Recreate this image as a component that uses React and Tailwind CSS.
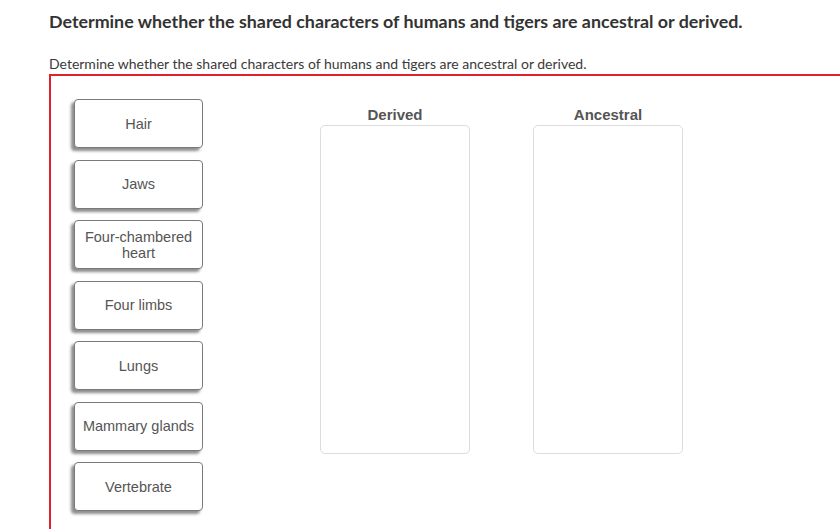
import React from "react";

const items = [
  "Hair",
  "Jaws",
  "Four-chambered heart",
  "Four limbs",
  "Lungs",
  "Mammary glands",
  "Vertebrate",
];

function Card({ label }) {
  return (
    <div className="w-[129px] h-[49px] flex items-center justify-center text-center bg-white border border-[#7a7a7a] rounded-[4px] shadow-[-3px_3px_3px_rgba(0,0,0,0.45)] px-1 text-[14.5px] leading-[16px] text-[#555]">
      <span className="w-[116px]">{label}</span>
    </div>
  );
}

function Column({ title }) {
  return (
    <div className="flex flex-col items-center w-[150px]">
      <div className="text-[15px] font-bold text-[#555] leading-[20px] pt-[1px]">{title}</div>
      <div className="w-[150px] h-[329px] border border-[#dcdcdc] rounded-[5px] bg-white" />
    </div>
  );
}

export default function App() {
  return (
    <div className="w-[840px] h-[529px] overflow-hidden bg-white" style={{ fontFamily: '"Liberation Sans", Arial, sans-serif' }}>
      <div className="pl-[49px] pt-[10px]">
        <h1 className="text-[17.85px] font-bold text-[#333] leading-[22px]" style={{ fontFamily: 'Lato, "Open Sans", sans-serif' }}>
          Determine whether the shared characters of humans and tigers are ancestral or derived.
        </h1>
        <p className="mt-[24px] text-[14px] text-[#3a3a3a] leading-[16px]" style={{ fontFamily: 'Lato, "Open Sans", sans-serif' }}>
          Determine whether the shared characters of humans and tigers are ancestral or derived.
        </p>
        <div className="mt-[2px] border-t-2 border-l-2 border-[#e0202e] h-[460px] flex">
          <div className="flex flex-col gap-[11.5px] pl-[23px] pt-[23px]">
            {items.map((it) => (
              <Card key={it} label={it} />
            ))}
          </div>
          <div className="flex gap-[63px] pl-[117px] pt-[28px]">
            <Column title="Derived" />
            <Column title="Ancestral" />
          </div>
        </div>
      </div>
    </div>
  );
}
